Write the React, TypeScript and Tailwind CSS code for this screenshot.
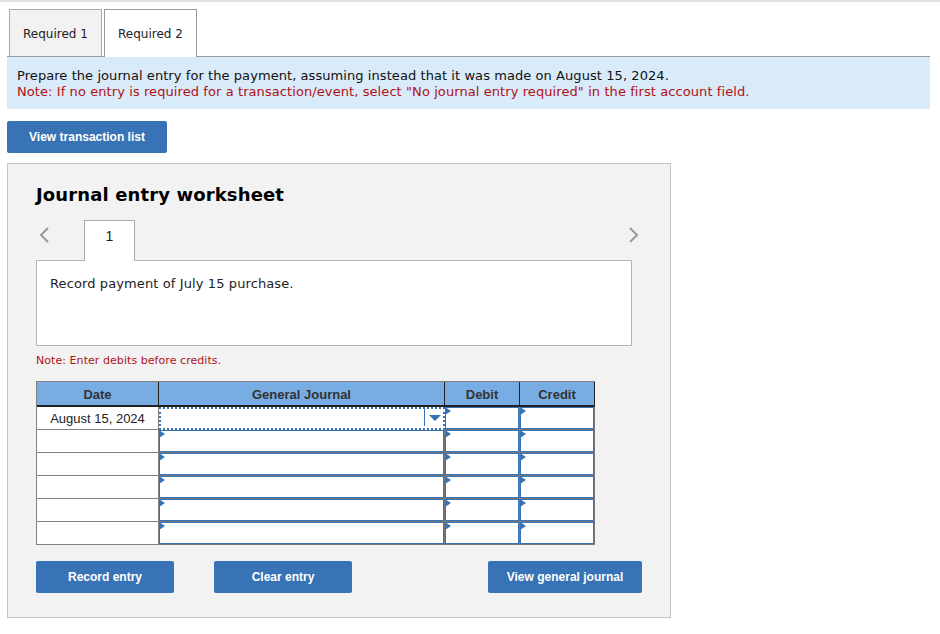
const verdana = "font-['DejaVu_Sans','Liberation_Sans',sans-serif]";
const arial = "font-['Liberation_Sans',Arial,sans-serif]";

function ActionButton({ label, width }: { label: string; width: string }) {
  return (
    <button
      className={`h-8 ${width} rounded-[2px] bg-[#3873b5] text-xs font-bold text-white ${arial}`}
    >
      {label}
    </button>
  );
}

function Flag() {
  return (
    <span className="absolute left-0 top-0 h-0 w-0 border-y-[4px] border-l-[6px] border-y-transparent border-l-[#3873b5]" />
  );
}

function EntryCell({ width }: { width: string }) {
  return (
    <div className={`relative h-[23px] ${width} border-r border-b border-[#777]`}>
      <div className="h-full border border-[#3873b5] bg-white" />
      <Flag />
    </div>
  );
}

function Row({ date, active }: { date?: string; active?: boolean }) {
  return (
    <div className="flex">
      <div
        className={`flex h-[23px] w-[122px] items-center justify-center border-r border-b border-[#808080] bg-white pt-[2px] text-[13px] text-[#222] ${arial}`}
      >
        {date}
      </div>
      {active ? (
        <div className="relative flex h-[23px] w-[286px] justify-end border-2 border-dotted border-[#3873b5] bg-white">
          <div className="flex h-[17px] w-[19px] items-center justify-center border-l border-[#3873b5] pl-[1px]">
            <span className="h-0 w-0 border-x-[6px] border-t-[6px] border-x-transparent border-t-[#3873b5]" />
          </div>
        </div>
      ) : (
        <EntryCell width="w-[286px]" />
      )}
      <EntryCell width="w-[75px]" />
      <EntryCell width="w-[75px]" />
    </div>
  );
}

function HeaderCell({ label, width }: { label: string; width: string }) {
  return (
    <div
      className={`flex h-full ${width} items-center justify-center border-r border-[#222] pt-[2px] text-[13px] font-bold text-[#333] ${arial}`}
    >
      {label}
    </div>
  );
}

export default function App() {
  return (
    <div className={`h-[634px] w-[940px] overflow-hidden bg-white ${verdana}`}>
      <div className="h-[2px] bg-[#e2e2e2]" />

      <div className="ml-[7px] mr-[10px] mt-[7px] flex h-[48px] items-end gap-[2px] border-b border-[#999] pl-[2px]">
        <div className="flex h-[47px] w-[93px] items-center justify-center border border-b-0 border-[#aaa] bg-[#f2f2f2] pt-[2px] text-xs text-[#222]">
          Required 1
        </div>
        <div className="-mb-px flex h-[48px] w-[93px] items-center justify-center border border-b-0 border-[#999] bg-white text-xs text-[#222]">
          Required 2
        </div>
      </div>

      <div className="ml-[7px] mr-[10px] h-[52px] bg-[#d9eaf9] px-[10px] pt-[11px] text-[13px] leading-4">
        <p className="tracking-[0.07px] text-[#111]">
          Prepare the journal entry for the payment, assuming instead that it was made on August 15, 2024.
        </p>
        <p className="tracking-[0.085px] text-[#b01116]">
          Note: If no entry is required for a transaction/event, select "No journal entry required" in the first account field.
        </p>
      </div>

      <div className="ml-[7px] mt-3">
        <ActionButton label="View transaction list" width="w-40" />
      </div>

      <div className="ml-[7px] mt-[10px] h-[455px] w-[664px] border border-[#c4c4c4] bg-[#f2f2f2] pl-[28px] pt-[19px]">
        <h2 className="text-[18px] font-bold leading-6 tracking-[0.13px] text-black">Journal entry worksheet</h2>

        <div className="mt-[13px] flex h-[40px] w-[596px] items-center">
          <svg width="10" height="16" viewBox="0 0 10 16" className="mb-[10px] ml-[3px] text-[#999]">
            <path d="M9 1 2 8l7 7" fill="none" stroke="currentColor" strokeWidth="2" />
          </svg>
          <div className={`relative z-10 ml-[35px] flex h-[41px] w-[51px] self-start items-center justify-center border border-b-0 border-[#aaa] bg-white pb-[11px] text-sm text-[#222] ${arial}`}>
            1
          </div>
          <svg width="10" height="16" viewBox="0 0 10 16" className="mb-[10px] ml-auto mr-[-7px] text-[#999]">
            <path d="m1 1 7 7-7 7" fill="none" stroke="currentColor" strokeWidth="2" />
          </svg>
        </div>

        <div className="h-[86px] w-[596px] border border-[#b5b5b5] bg-white px-[13px] pt-[15px] text-[13px] leading-4 tracking-[0.11px] text-[#222]">
          Record payment of July 15 purchase.
        </div>

        <p className="mt-[7px] text-[11px] leading-4 tracking-[0.06px] text-[#b01116]">Note: Enter debits before credits.</p>

        <div className="mt-3 w-[559px] border-t border-l border-[#808080]">
          <div className="flex h-[25px] border-b-2 border-[#222] bg-[#78ade3]">
            <HeaderCell label="Date" width="w-[122px]" />
            <HeaderCell label="General Journal" width="w-[286px]" />
            <HeaderCell label="Debit" width="w-[75px]" />
            <HeaderCell label="Credit" width="w-[75px]" />
          </div>
          <Row date="August 15, 2024" active />
          <Row />
          <Row />
          <Row />
          <Row />
          <Row />
        </div>

        <div className="mt-4 flex w-[606px]">
          <ActionButton label="Record entry" width="w-[138px]" />
          <div className="ml-10">
            <ActionButton label="Clear entry" width="w-[138px]" />
          </div>
          <div className="ml-auto">
            <ActionButton label="View general journal" width="w-[154px]" />
          </div>
        </div>
      </div>
    </div>
  );
}
